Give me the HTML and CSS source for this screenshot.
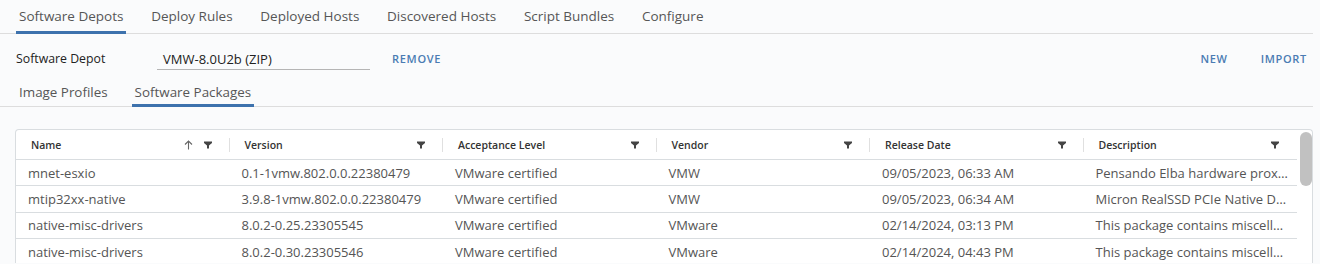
FILE: index.html
```html
<!DOCTYPE html>
<html>
<head>
<meta charset="utf-8">
<link rel="stylesheet" href="styles.css">
</head>
<body>
<div class="page">
  <nav class="tabs">
    <span class="tab active">Software Depots</span>
    <span class="tab">Deploy Rules</span>
    <span class="tab">Deployed Hosts</span>
    <span class="tab">Discovered Hosts</span>
    <span class="tab">Script Bundles</span>
    <span class="tab">Configure</span>
  </nav>
  <div class="depot-row">
    <span class="depot-label">Software Depot</span>
    <div class="depot-select">VMW-8.0U2b (ZIP)</div>
    <span class="link remove">REMOVE</span>
    <span class="spacer"></span>
    <span class="link">NEW</span>
    <span class="link import">IMPORT</span>
  </div>
  <nav class="tabs subtabs">
    <span class="tab">Image Profiles</span>
    <span class="tab active">Software Packages</span>
  </nav>
  <div class="grid">
    <div class="grid-body">
      <div class="row head">
        <div class="hc">Name<span class="icons"><svg class="sort" width="9" height="10" viewBox="0 0 9 10"><path d="M4.5 9.5V1M1 4.5L4.5 1L8 4.5" fill="none" stroke="#666" stroke-width="1.1"/></svg><svg class="filt" width="8" height="8" viewBox="0 0 8 8"><path d="M0 0.5H8V2L5 4.5V7.5H3V4.5L0 2Z" fill="#444"/></svg></span></div>
        <div class="hc">Version<span class="icons"><svg class="filt" width="8" height="8" viewBox="0 0 8 8"><path d="M0 0.5H8V2L5 4.5V7.5H3V4.5L0 2Z" fill="#444"/></svg></span></div>
        <div class="hc">Acceptance Level<span class="icons"><svg class="filt" width="8" height="8" viewBox="0 0 8 8"><path d="M0 0.5H8V2L5 4.5V7.5H3V4.5L0 2Z" fill="#444"/></svg></span></div>
        <div class="hc">Vendor<span class="icons"><svg class="filt" width="8" height="8" viewBox="0 0 8 8"><path d="M0 0.5H8V2L5 4.5V7.5H3V4.5L0 2Z" fill="#444"/></svg></span></div>
        <div class="hc">Release Date<span class="icons"><svg class="filt" width="8" height="8" viewBox="0 0 8 8"><path d="M0 0.5H8V2L5 4.5V7.5H3V4.5L0 2Z" fill="#444"/></svg></span></div>
        <div class="hc last">Description<span class="icons"><svg class="filt" width="8" height="8" viewBox="0 0 8 8"><path d="M0 0.5H8V2L5 4.5V7.5H3V4.5L0 2Z" fill="#444"/></svg></span></div>
      </div>
      <div class="row">
        <div class="c">mnet-esxio</div>
        <div class="c">0.1-1vmw.802.0.0.22380479</div>
        <div class="c">VMware certified</div>
        <div class="c">VMW</div>
        <div class="c">09/05/2023, 06:33 AM</div>
        <div class="c desc">Pensando Elba hardware prox…</div>
      </div>
      <div class="row">
        <div class="c">mtip32xx-native</div>
        <div class="c">3.9.8-1vmw.802.0.0.22380479</div>
        <div class="c">VMware certified</div>
        <div class="c">VMW</div>
        <div class="c">09/05/2023, 06:34 AM</div>
        <div class="c desc">Micron RealSSD PCIe Native D…</div>
      </div>
      <div class="row">
        <div class="c">native-misc-drivers</div>
        <div class="c">8.0.2-0.25.23305545</div>
        <div class="c">VMware certified</div>
        <div class="c">VMware</div>
        <div class="c">02/14/2024, 03:13 PM</div>
        <div class="c desc">This package contains miscell…</div>
      </div>
      <div class="row">
        <div class="c">native-misc-drivers</div>
        <div class="c">8.0.2-0.30.23305546</div>
        <div class="c">VMware certified</div>
        <div class="c">VMware</div>
        <div class="c">02/14/2024, 04:43 PM</div>
        <div class="c desc">This package contains miscell…</div>
      </div>
    </div>
    <div class="scroll"><div class="thumb"></div></div>
  </div>
</div>
</body>
</html>
```
FILE: styles.css
```css
* { box-sizing: border-box; }
html, body { margin: 0; padding: 0; }
body {
  background: #fafbfc;
  font-family: "Open Sans", "Liberation Sans", sans-serif;
  color: #565656;
  width: 1320px;
  height: 264px;
  overflow: hidden;
}
.page { padding: 0 7px 0 0; }
.tabs {
  display: flex;
  height: 34px;
  border-bottom: 1px solid #dddddd;
  padding-left: 16px;
  gap: 21.7px;
}
.tab {
  display: flex;
  align-items: center;
  padding: 1px 3px 0;
  font-size: 13.5px;
  color: #565656;
  border-bottom: 3px solid transparent;
  margin-bottom: -1px;
  white-space: nowrap;
}
.tab.active { border-bottom-color: #3d72ad; }
.depot-row {
  display: flex;
  align-items: center;
  height: 49px;
  padding: 0 6px 0 16px;
}
.depot-label { font-size: 12.3px; color: #222; width: 141px; }
.depot-select {
  width: 213px;
  height: 22px;
  border-bottom: 1px solid #b5b5b5;
  padding: 0 6px;
  font-size: 13px;
  color: #222;
  display: flex;
  align-items: center;
  margin-top: 1px;
}
.link {
  font-size: 11px;
  font-weight: 600;
  letter-spacing: 0.7px;
  color: #4a7cb3;
}
.remove { margin-left: 22px; }
.spacer { flex: 1; }
.import { margin-left: 33px; }
.subtabs { height: 24px; gap: 21px; }
.subtabs .tab { padding: 0 3px 4px; font-size: 13.4px; }
.grid {
  margin: 22px 0 0 15px;
  background: #fff;
  border: 1px solid #d9dde0;
  border-bottom: none;
  border-radius: 4px 4px 0 0;
  display: flex;
  height: 134px;
  overflow: hidden;
}
.grid-body { width: 1281px; }
.row {
  display: grid;
  grid-template-columns: repeat(6, 213.5px);
  height: 26.4px;
  border-bottom: 1px solid #d9dde0;
  align-items: center;
}
.row.head { height: 30px; }
.hc {
  position: relative;
  display: flex;
  align-items: center;
  height: 100%;
  padding-left: 15px;
  font-size: 10.5px;
  font-weight: 600;
  color: #333;
}
.hc::after {
  content: "";
  position: absolute;
  right: 0;
  top: 8px;
  bottom: 7px;
  width: 1px;
  background: #e0e0e0;
}
.hc.last::after { display: none; }
.icons {
  margin-left: auto;
  margin-right: 18px;
  display: flex;
  align-items: center;
  gap: 11px;
}
.c {
  padding: 0 12px 0 12px;
  font-size: 13px;
  color: #555;
  white-space: nowrap;
  overflow: hidden;
}
.c.desc { padding-right: 4px; }
.scroll {
  flex: 1;
  padding: 2px 2px 0 2px;
}
.thumb {
  width: 12px;
  margin-left: 1px;
  height: 54px;
  background: #c1c1c1;
  border-radius: 6px;
}
```
